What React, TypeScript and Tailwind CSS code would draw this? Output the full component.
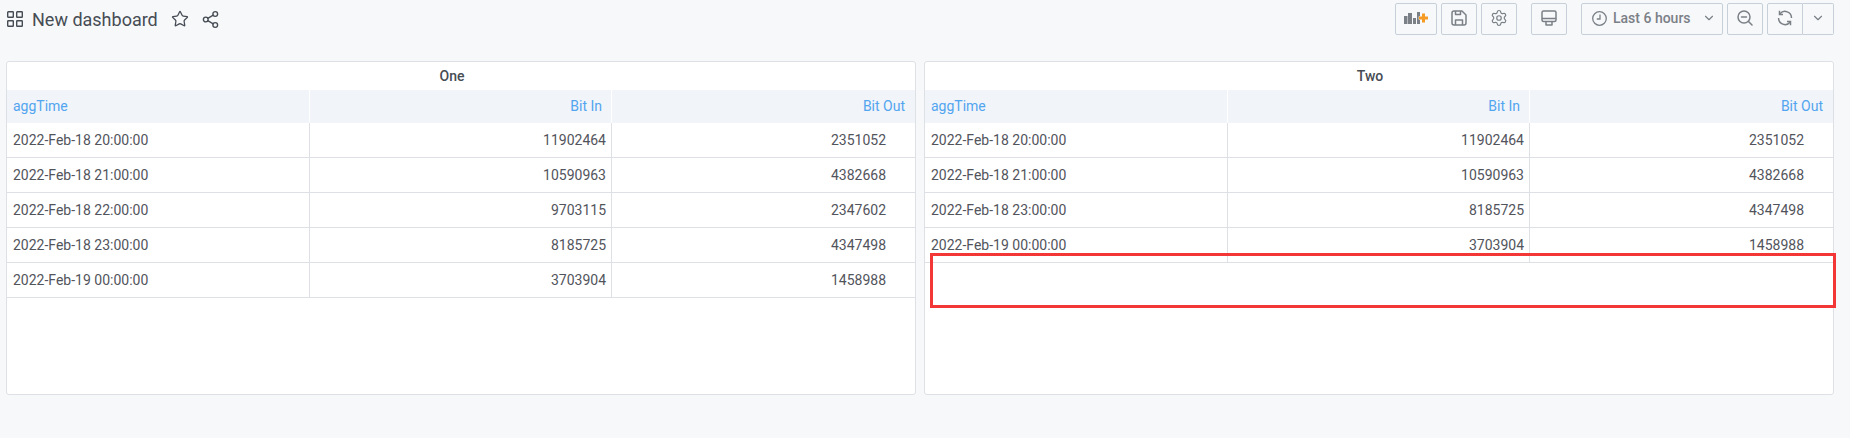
import React from "react";
import { Star, Share2, Settings, ChevronDown } from "lucide-react";

const C1 = [
  ["2022-Feb-18 20:00:00", "11902464", "2351052"],
  ["2022-Feb-18 21:00:00", "10590963", "4382668"],
  ["2022-Feb-18 22:00:00", "9703115", "2347602"],
  ["2022-Feb-18 23:00:00", "8185725", "4347498"],
  ["2022-Feb-19 00:00:00", "3703904", "1458988"],
];
const C2 = [C1[0], C1[1], C1[3], C1[4]];

function Btn({ children, className = "" }: { children: React.ReactNode; className?: string }) {
  return (
    <div className={"h-[32px] pb-[2px] flex items-center justify-center border border-[#c7d0d9] rounded-[2px] bg-[#f7f8fa] text-[#7b8087] " + className}>
      {children}
    </div>
  );
}

function Panel({ title, rows }: { title: string; rows: string[][] }) {
  return (
    <div className="flex-1 h-[334px] bg-white border border-[#dde1e6] rounded-[3px] overflow-hidden">
      <div className="h-[28px] flex items-center justify-center pr-[18px] text-[14px] font-medium text-[#464c54]">{title}</div>
      <table className="w-full table-fixed border-separate border-spacing-0 text-[14px]">
        <thead>
          <tr className="h-[33px] bg-[#f1f4f9] text-[#52a5ef]">
            <th className="w-[302px] text-left font-normal pl-[6px]">aggTime</th>
            <th className="w-[302px] text-right font-normal pr-[9px] border-l border-white">Bit In</th>
            <th className="text-right font-normal pr-[10px] border-l border-white">Bit Out</th>
          </tr>
        </thead>
        <tbody className="text-[#52545c]">
          {rows.map((r) => (
            <tr key={r[0]} className="h-[35px]">
              <td className="pl-[6px] border-b border-[#dde1e6]">{r[0]}</td>
              <td className="text-right pr-[5px] border-l border-b border-[#dde1e6]">{r[1]}</td>
              <td className="text-right pr-[29px] border-l border-b border-[#dde1e6]">{r[2]}</td>
            </tr>
          ))}
        </tbody>
      </table>
    </div>
  );
}

export default function App() {
  return (
    <div className="relative w-[1850px] h-[438px] overflow-hidden bg-[#f7f8fa] font-['Roboto',sans-serif]">
      <div className="h-[61px] flex items-start justify-between pl-[7px] pr-[16px]">
        <div className="flex items-center h-[38px] text-[#464c54]">
          <svg width="16" height="16" viewBox="0 0 16 16" fill="none" stroke="currentColor" strokeWidth="1.4">
            <rect x="0.7" y="0.7" width="5.600" height="5.600" rx="0.6" />
            <rect x="9.700" y="0.7" width="5.600" height="5.600" rx="0.6" />
            <rect x="0.7" y="9.700" width="5.600" height="5.600" rx="0.6" />
            <rect x="9.700" y="9.700" width="5.600" height="5.600" rx="0.6" />
          </svg>
          <span className="ml-[9px] text-[18px]">New dashboard</span>
          <Star size={18} strokeWidth={1.7} className="ml-[13px]" />
          <Share2 size={19} strokeWidth={1.7} className="ml-[12px]" />
        </div>
        <div className="flex items-center mt-[3px]">
          <Btn className="w-[42px]">
            <svg width="24" height="12" viewBox="0 0 24 12">
              <path d="M0 4h3.500v8H0zM4 1h4v11H4zM9 6h3v6H9zM13 0h3v12h-3z" fill="#7b8087" />
              <path d="M18 1.500h3v3h3v3h-3v3h-3v-3h-3v-3h3z" fill="#f59a23" stroke="#f7f8fa" strokeWidth="0.8" paintOrder="stroke" />
            </svg>
          </Btn>
          <Btn className="w-[36px] ml-[4px]">
            <svg width="16" height="16" viewBox="0 0 16 16" fill="none" stroke="currentColor" strokeWidth="1.500" strokeLinejoin="round">
              <path d="M3 1h8l4 4v8a2 2 0 0 1-2 2H3a2 2 0 0 1-2-2V3a2 2 0 0 1 2-2z" />
              <path d="M4.500 15V10h7v5M4.500 1v3.500h5V1" />
            </svg>
          </Btn>
          <Btn className="w-[36px] ml-[4px]"><Settings size={18} strokeWidth={1.6} /></Btn>
          <Btn className="w-[36px] ml-[14px]">
            <svg width="16" height="16" viewBox="0 0 16 16" fill="none" stroke="currentColor" strokeWidth="1.500" strokeLinejoin="round">
              <rect x="1" y="1" width="14" height="10.500" rx="1.500" />
              <path d="M1 8.500h14M5 11.500v3.500h6v-3.500" />
            </svg>
          </Btn>
          <Btn className="w-[142px] ml-[14px] text-[14px] font-medium justify-start pl-[10px]">
            <svg width="15" height="15" viewBox="0 0 15 15" fill="none" stroke="currentColor" strokeWidth="1.300" className="shrink-0">
              <circle cx="7.500" cy="7.500" r="6.800" />
              <path d="M8 3.500V8H4.800" />
            </svg>
            <span className="ml-[6px]">Last 6 hours</span>
            <ChevronDown size={14} className="ml-[11px]" />
          </Btn>
          <Btn className="w-[36px] ml-[4px]">
            <svg width="16" height="16" viewBox="0 0 16 16" fill="none" stroke="currentColor" strokeWidth="1.500" strokeLinecap="round">
              <circle cx="7" cy="7" r="6" />
              <path d="M4.500 7h5M11.500 11.500L15 15" />
            </svg>
          </Btn>
          <Btn className="w-[36px] ml-[4px] rounded-r-none">
            <svg width="16" height="16" viewBox="0 0 16 16" fill="none" stroke="currentColor" strokeWidth="1.500" className="-scale-x-100">
              <path d="M14.500 8A6.500 6.500 0 0 1 3 12.200M1.500 8A6.500 6.500 0 0 1 13 3.800" />
              <path d="M13.500 0.800v3.700H10M2.500 15.200v-3.700H6" />
            </svg>
          </Btn>
          <Btn className="w-[31px] border-l-0 rounded-l-none"><ChevronDown size={14} /></Btn>
        </div>
      </div>
      <div className="flex gap-[8px] pl-[6px] pr-[16px]">
        <Panel title="One" rows={C1} />
        <Panel title="Two" rows={C2} />
      </div>
      <div className="absolute left-[930px] top-[253px] w-[906px] h-[55px] border-[3px] border-[#f33636] pointer-events-none" />
    </div>
  );
}
